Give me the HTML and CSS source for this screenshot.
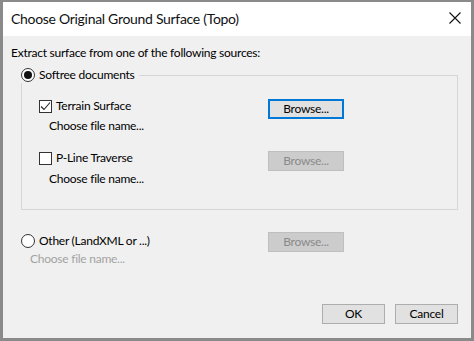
FILE: index.html
```html
<!DOCTYPE html>
<html lang="en">
<head>
    <meta charset="UTF-8">
    <title>Choose Original Ground Surface (Topo)</title>
    <link rel="stylesheet" href="styles.css">
</head>
<body>
    <div class="window">
        <!-- Titulek okna -->
        <div class="titlebar">
            <span class="title">Choose Original Ground Surface (Topo)</span>
            <svg class="close" width="12" height="12" viewBox="0 0 12 12">
                <path d="M0.5 0.5 L11.5 11.5 M11.5 0.5 L0.5 11.5" stroke="#111" stroke-width="1.1" fill="none"/>
            </svg>
        </div>

        <div class="content">
            <div class="intro">Extract surface from one of the following sources:</div>

            <fieldset class="group">
                <legend class="option">
                    <span class="radio checked"></span>
                    <span>Softree documents</span>
                </legend>

                <div class="source first">
                    <div class="source-row">
                        <label class="check-label">
                            <span class="checkbox">
                                <svg width="11" height="11" viewBox="0 0 11 11">
                                    <path d="M1 5.5 L4 8.5 L10 1.5" stroke="#222" stroke-width="1.1" fill="none"/>
                                </svg>
                            </span>
                            <span>Terrain Surface</span>
                        </label>
                        <button class="btn browse default">Browse...</button>
                    </div>
                    <div class="filename">Choose file name...</div>
                </div>

                <div class="source second">
                    <div class="source-row">
                        <label class="check-label">
                            <span class="checkbox"></span>
                            <span>P-Line Traverse</span>
                        </label>
                        <button class="btn browse" disabled>Browse...</button>
                    </div>
                    <div class="filename">Choose file name...</div>
                </div>
            </fieldset>

            <div class="other">
                <div class="source-row">
                    <label class="option">
                        <span class="radio"></span>
                        <span>Other (LandXML or ...)</span>
                    </label>
                    <button class="btn browse" disabled>Browse...</button>
                </div>
                <div class="filename disabled">Choose file name...</div>
            </div>

            <div class="actions">
                <button class="btn action">OK</button>
                <button class="btn action">Cancel</button>
            </div>
        </div>
    </div>
</body>
</html>
```

FILE: styles.css
```css
body {
    margin: 0;
    font-family: Lato, 'Noto Sans', Arial, sans-serif;
    font-size: 12px;
    letter-spacing: -0.25px;
    color: #000;
    background: #fff;
}
.window {
    width: 474px;
    height: 341px;
    box-sizing: border-box;
    border: 3px solid #8a8a8a;
    border-top-width: 2px;
    display: flex;
    flex-direction: column;
    background: #f0f0f0;
}
.titlebar {
    height: 32px;
    background: #fff;
    display: flex;
    align-items: center;
    justify-content: space-between;
    padding: 0 10px 2px 8px;
    flex-shrink: 0;
}
.title {
    font-size: 14px;
    letter-spacing: -0.3px;
    color: #111;
}
.close {
    display: block;
}
.content {
    flex: 1;
    padding: 9px 13px 0 8px;
    display: flex;
    flex-direction: column;
}
.intro {
    line-height: 16px;
    height: 16px;
}
/* Skupina Softree */
.group {
    margin: 6px 0 0 10px;
    padding: 0 0 22px 17px;
    border: 1px solid #d6d6d6;
    min-width: 0;
}
.group legend {
    padding: 0 4px 0 0;
    margin-left: -18px;
    line-height: 16px;
}
.option {
    display: flex;
    align-items: center;
    gap: 4px;
    line-height: 16px;
}
.radio {
    width: 12px;
    height: 12px;
    border: 1px solid #333;
    border-radius: 50%;
    background: #fff;
    display: inline-flex;
    align-items: center;
    justify-content: center;
    flex-shrink: 0;
}
.radio.checked::after {
    content: '';
    width: 8px;
    height: 8px;
    border-radius: 50%;
    background: #111;
}
.source.first {
    margin-top: 16px;
}
.source.second {
    margin-top: 17px;
}
.source-row {
    display: flex;
    align-items: flex-start;
    height: 20px;
}
.source .source-row {
    height: 19px;
}
.source.second .source-row {
    height: 20px;
}
.check-label {
    display: flex;
    align-items: center;
    gap: 4px;
    width: 229px;
    line-height: 14px;
}
.checkbox {
    width: 11px;
    height: 11px;
    border: 1px solid #333;
    background: #fff;
    display: inline-flex;
    align-items: center;
    justify-content: center;
    flex-shrink: 0;
}
.second .checkbox {
    margin-top: 1px;
}
.filename {
    line-height: 16px;
    padding-left: 10px;
}
.filename.disabled {
    color: #a3a3a3;
    padding-left: 9px;
}
.btn {
    font-family: inherit;
    font-size: 12px;
    letter-spacing: inherit;
    color: #000;
    background: #e1e1e1;
    border: 1px solid #adadad;
    padding: 0;
    height: 20px;
    box-sizing: border-box;
    line-height: 16px;
}
.btn.browse {
    width: 76px;
}
.btn.default {
    border: 2px solid #0078d7;
}
.btn:disabled {
    background: #cccccc;
    border-color: #bfbfbf;
    color: #8a8a8a;
}
/* Volba Other */
.other {
    margin: 22px 0 0 10px;
}
.other .option {
    width: 247px;
    margin-top: 1px;
}
.other .source-row {
    height: 19px;
}
.actions {
    display: flex;
    justify-content: flex-end;
    gap: 10px;
    margin-top: 37px;
}
.btn.action {
    width: 63px;
}
```
